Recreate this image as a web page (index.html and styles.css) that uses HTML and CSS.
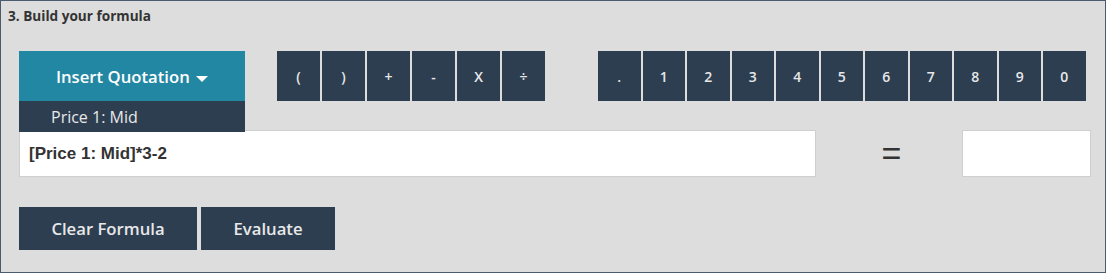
FILE: index.html
```html
<!DOCTYPE html>
<html lang="en">
<head>
<meta charset="UTF-8">
<title>Build your formula</title>
<link rel="stylesheet" href="styles.css">
</head>
<body>
<div class="panel">
  <h3 class="title">3. Build your formula</h3>
  <div class="toolbar">
    <div class="quote">
      <button class="quote-btn">Insert Quotation <span class="caret"></span></button>
      <ul class="menu">
        <li>Price 1: Mid</li>
      </ul>
    </div>
    <div class="keys ops">
      <button>(</button>
      <button>)</button>
      <button>+</button>
      <button>-</button>
      <button>X</button>
      <button>&divide;</button>
    </div>
    <div class="keys digits">
      <button>.</button>
      <button>1</button>
      <button>2</button>
      <button>3</button>
      <button>4</button>
      <button>5</button>
      <button>6</button>
      <button>7</button>
      <button>8</button>
      <button>9</button>
      <button>0</button>
    </div>
  </div>
  <div class="formula-row">
    <input class="formula" type="text" value="[Price 1: Mid]*3-2">
    <span class="equals">=</span>
    <input class="result" type="text" value="">
  </div>
  <div class="actions">
    <button class="clear">Clear Formula</button>
    <button class="evaluate">Evaluate</button>
  </div>
</div>
</body>
</html>
```

FILE: styles.css
```css
*{
  margin: 0;
  padding: 0;
  box-sizing: border-box;
  list-style: none;
}
body{
  font-family: "Open Sans", "Noto Sans", sans-serif;
  background: #fff;
}
.panel{
  width: 1106px;
  height: 273px;
  border: 1px solid #4a5b70;
  background: #dddddd;
  padding: 0 0 0 18px;
}
.title{
  font-size: 13.6px;
  font-weight: 700;
  color: #333;
  line-height: 18px;
  padding-top: 6px;
  margin-left: -11px;
}
button{
  font-family: "Open Sans", "Noto Sans", sans-serif;
  border: 0;
  background: #2d3e51;
  color: #e8e8e8;
  cursor: pointer;
}
.toolbar{
  display: flex;
  margin-top: 26px;
  height: 50px;
}
.quote{
  position: relative;
  width: 226px;
}
.quote-btn{
  width: 226px;
  height: 50px;
  background: #2287a3;
  color: #fff;
  font-size: 16.7px;
  font-weight: 600;
  padding-left: 0;
}
.caret{
  display: inline-block;
  width: 0;
  height: 0;
  border-left: 6px solid transparent;
  border-right: 6px solid transparent;
  border-top: 6px solid #fff;
  vertical-align: middle;
  margin-left: 2px;
  margin-top: 2px;
}
.menu{
  position: absolute;
  left: 0;
  top: 50px;
  width: 226px;
  background: #2d3e51;
  z-index: 10;
}
.menu li{
  height: 31px;
  line-height: 32px;
  padding-left: 32px;
  font-size: 16px;
  color: #e8e8e8;
}
.keys{
  display: flex;
  gap: 2px;
}
.keys button{
  width: 43px;
  height: 50px;
  font-size: 14px;
  font-weight: 600;
}
.ops{
  margin-left: 32px;
}
.digits{
  margin-left: 53px;
}
.digits button{
  width: 42.5px;
}
.formula-row{
  display: flex;
  align-items: center;
  margin-top: 29px;
  height: 47px;
}
.formula-row input{
  height: 47px;
  border: 1px solid #cfcfcf;
  background: #fff;
  outline: none;
}
.formula{
  width: 797px;
  padding-left: 9px;
  font-family: "Liberation Sans", Arial, sans-serif;
  font-size: 17px;
  font-weight: 700;
  color: #333;
}
.equals{
  width: 146px;
  padding-left: 5px;
  text-align: center;
  font-family: "Liberation Sans", Arial, sans-serif;
  font-size: 34px;
  font-weight: 400;
  color: #333;
  line-height: 47px;
}
.result{
  width: 129px;
}
.actions{
  display: flex;
  gap: 4px;
  margin-top: 30px;
}
.actions button{
  height: 43px;
  font-size: 16.7px;
  font-weight: 600;
}
.clear{
  width: 178px;
}
.evaluate{
  width: 134px;
}
```
